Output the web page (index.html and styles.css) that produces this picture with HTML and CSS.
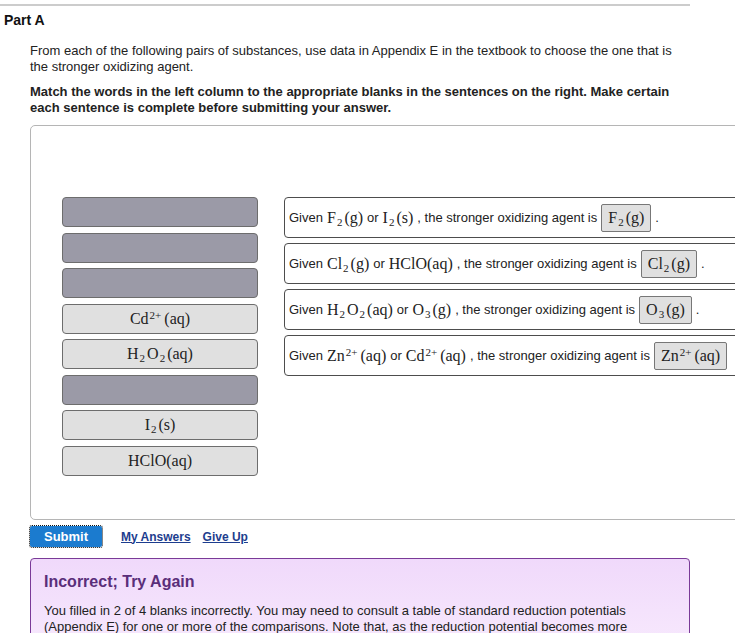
FILE: index.html
```html
<!DOCTYPE html>
<html>
<head>
    <title>Part A</title>
    <meta charset='utf-8'>
    <link rel="stylesheet" href="styles.css">
</head>
<body>
    <div class="top-rule"></div>
    <h2 class="part-title">Part A</h2>

    <div class="problem">
        <p class="intro">From each of the following pairs of substances, use data in Appendix E in the textbook to choose the one that is the stronger oxidizing agent.</p>
        <p class="instructions">Match the words in the left column to the appropriate blanks in the sentences on the right. Make certain each sentence is complete before submitting your answer.</p>

        <div class="drag-area">
            <div class="word-bank">
                <div class="tile empty"></div>
                <div class="tile empty"></div>
                <div class="tile empty"></div>
                <div class="tile"><span class="m">Cd<sup>2+</sup>(aq)</span></div>
                <div class="tile"><span class="m">H<sub>2</sub>O<sub>2</sub>(aq)</span></div>
                <div class="tile empty"></div>
                <div class="tile"><span class="m">I<sub>2</sub>(s)</span></div>
                <div class="tile"><span class="m">HClO(aq)</span></div>
            </div>

            <div class="sentences">
                <div class="sentence">
                    Given <span class="m">F<sub>2</sub>(g)</span> or <span class="m">I<sub>2</sub>(s)</span> , the stronger oxidizing agent is
                    <span class="blank"><span class="m">F<sub>2</sub>(g)</span></span> .
                </div>
                <div class="sentence">
                    Given <span class="m">Cl<sub>2</sub>(g)</span> or <span class="m">HClO(aq)</span> , the stronger oxidizing agent is
                    <span class="blank"><span class="m">Cl<sub>2</sub>(g)</span></span> .
                </div>
                <div class="sentence">
                    Given <span class="m">H<sub>2</sub>O<sub>2</sub>(aq)</span> or <span class="m">O<sub>3</sub>(g)</span> , the stronger oxidizing agent is
                    <span class="blank"><span class="m">O<sub>3</sub>(g)</span></span> .
                </div>
                <div class="sentence">
                    Given <span class="m">Zn<sup>2+</sup>(aq)</span> or <span class="m">Cd<sup>2+</sup>(aq)</span> , the stronger oxidizing agent is
                    <span class="blank"><span class="m">Zn<sup>2+</sup>(aq)</span></span>
                </div>
            </div>
        </div>

        <div class="actions">
            <button class="submit-btn">Submit</button>
            <a href="#" class="action-link">My Answers</a>
            <a href="#" class="action-link">Give Up</a>
        </div>

        <div class="feedback">
            <h3>Incorrect; Try Again</h3>
            <p>You filled in 2 of 4 blanks incorrectly. You may need to consult a table of standard reduction potentials (Appendix E) for one or more of the comparisons. Note that, as the reduction potential becomes more positive, the substance becomes a stronger oxidizing agent.</p>
        </div>
    </div>
</body>
</html>
```

FILE: styles.css
```css
body {
    margin: 0;
    font-family: "Liberation Sans", Arial, sans-serif;
    color: #222;
    background: #fff;
    overflow: hidden;
}
.top-rule {
    margin-top: 4px;
    width: 690px;
    height: 2px;
    background: #cccccc;
}
.part-title {
    margin: 6px 0 0 4px;
    font-size: 14px;
    line-height: 16px;
    font-weight: bold;
    color: #111;
}
.problem {
    padding-left: 30px;
}
.intro {
    margin: 15px 0 0 0;
    width: 650px;
    font-size: 13px;
    line-height: 16px;
}
.instructions {
    margin: 9px 0 0 0;
    width: 650px;
    font-size: 13px;
    line-height: 16px;
    font-weight: bold;
}
.drag-area {
    margin-top: 9px;
    width: 760px;
    height: 395px;
    box-sizing: border-box;
    border: 1px solid #b5b5b5;
    border-radius: 5px;
    padding: 71px 0 0 31px;
    display: flex;
    gap: 26px;
}
.m {
    font-family: "Liberation Serif", "Times New Roman", serif;
    font-size: 16px;
    white-space: nowrap;
}
.m sub {
    font-size: 11px;
    line-height: 0;
    vertical-align: -3px;
    margin: 0 2px 0 1px;
}
.m sup {
    font-size: 11px;
    line-height: 0;
    vertical-align: 5px;
    margin: 0 3px 0 1px;
}
.word-bank {
    width: 196px;
    display: flex;
    flex-direction: column;
    gap: 5.5px;
}
.tile {
    height: 30px;
    box-sizing: border-box;
    border: 1px solid #6d6d6d;
    border-radius: 4px;
    background: #e0e0e0;
    display: flex;
    align-items: center;
    justify-content: center;
    color: #222;
}
.tile.empty {
    background: #9b9aa7;
}
.sentences {
    width: 470px;
    display: flex;
    flex-direction: column;
    gap: 5px;
}
.sentence {
    height: 41px;
    box-sizing: border-box;
    border: 1px solid #4d4d4d;
    border-radius: 4px;
    padding: 0 4px;
    display: flex;
    align-items: center;
    gap: 4px;
    font-size: 13px;
    white-space: nowrap;
    color: #222;
}
.blank {
    height: 28px;
    box-sizing: border-box;
    border: 1px solid #777;
    border-radius: 2px;
    background: #e0e0e0;
    padding: 0 6px;
    display: flex;
    align-items: center;
}
.actions {
    margin-top: 6px;
    display: flex;
    align-items: center;
    gap: 12px;
}
.submit-btn {
    width: 72px;
    height: 21px;
    border: none;
    border-radius: 2px;
    background: #1b7bcf;
    color: #fff;
    font-family: "Liberation Sans", Arial, sans-serif;
    font-size: 13px;
    font-weight: bold;
    outline: 1px dotted #111;
    padding: 0;
    margin-right: 7px;
}
.action-link {
    font-size: 12px;
    font-weight: bold;
    color: #1d3d8e;
    text-decoration: underline;
}
.feedback {
    margin-top: 11px;
    width: 660px;
    box-sizing: border-box;
    border: 1px solid #7a3a98;
    border-radius: 4px;
    background: linear-gradient(180deg, #f0d9fb 0%, #f8ebfd 100%);
    padding: 13px 14px 12px 13px;
}
.feedback h3 {
    margin: 0;
    font-size: 16px;
    line-height: 20px;
    color: #5a2e7a;
}
.feedback p {
    margin: 11px 0 0 0;
    font-size: 13px;
    line-height: 16px;
    color: #222;
}
```
